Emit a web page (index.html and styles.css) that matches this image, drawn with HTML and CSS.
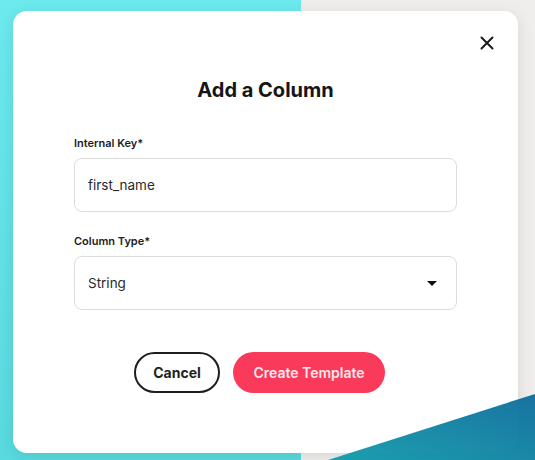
FILE: index.html
```html
<!DOCTYPE html>
<html lang="en">
<head>
<meta charset="utf-8">
<title>Add a Column</title>
<link rel="stylesheet" href="styles.css">
</head>
<body>
<div class="backdrop">
  <div class="modal">
    <div class="modal-top">
      <button class="close" aria-label="Close">
        <svg width="14" height="14" viewBox="0 0 14 14"><path d="M1.5 1.5 L12.5 12.5 M12.5 1.5 L1.5 12.5" stroke="#1c1c1c" stroke-width="2" stroke-linecap="round" fill="none"/></svg>
      </button>
    </div>
    <h1 class="title">Add a Column</h1>
    <div class="fields">
      <div class="field">
        <label class="label">Internal Key*</label>
        <div class="control">first_name</div>
      </div>
      <div class="field">
        <label class="label">Column Type*</label>
        <div class="control select">
          <span>String</span>
          <svg class="caret" width="10" height="5" viewBox="0 0 10 5"><path d="M0 0 H10 L5 5 Z" fill="#111"/></svg>
        </div>
      </div>
    </div>
    <div class="actions">
      <button class="btn btn-cancel">Cancel</button>
      <button class="btn btn-primary">Create Template</button>
    </div>
  </div>
  <svg class="wedge" width="207" height="66" viewBox="0 0 207 66">
    <defs>
      <linearGradient id="wg" x1="0" y1="1" x2="1" y2="0">
        <stop offset="0" stop-color="#0f9bab"/>
        <stop offset="1" stop-color="#0b6b9b"/>
      </linearGradient>
    </defs>
    <polygon points="0,66 207,0 207,66" fill="url(#wg)"/>
  </svg>
</div>
</body>
</html>
```

FILE: styles.css
```css
* { box-sizing: border-box; }
html, body {
  margin: 0;
  padding: 0;
}
body {
  font-family: "Inter", "Liberation Sans", sans-serif;
  color: #161616;
}
.backdrop {
  position: relative;
  width: 535px;
  height: 460px;
  overflow: hidden;
  padding: 11px 0 0 13px;
  background:
    linear-gradient(to right, transparent 0 301px, #efeeed 301px),
    linear-gradient(to bottom, #6ceaee, #58dadf);
}
.modal {
  width: 505px;
  height: 442px;
  background: #ffffff;
  border-radius: 14px;
  box-shadow: 0 3px 16px rgba(0, 0, 0, 0.10);
  padding: 0 61px;
  display: flex;
  flex-direction: column;
}
.modal-top {
  display: flex;
  justify-content: flex-end;
  margin: 25px -37px 0 0;
  height: 14px;
}
.close {
  border: 0;
  background: none;
  padding: 0;
  width: 14px;
  height: 14px;
  display: block;
  cursor: pointer;
}
.close svg { display: block; }
.title {
  margin: 28px 0 0 0;
  font-size: 20px;
  line-height: 24px;
  font-weight: 700;
  text-align: center;
  letter-spacing: 0;
  color: #151515;
}
.fields {
  margin-top: 34px;
  display: flex;
  flex-direction: column;
  gap: 22px;
}
.field {
  display: flex;
  flex-direction: column;
}
.label {
  font-size: 11px;
  line-height: 14px;
  font-weight: 600;
  color: #1d1d1d;
  margin-bottom: 8px;
}
.control {
  height: 54px;
  border: 1px solid #dcdcdc;
  border-radius: 8px;
  padding: 0 19px 0 13px;
  display: flex;
  align-items: center;
  font-size: 13.5px;
  color: #2a2a2a;
}
.select { justify-content: space-between; }
.caret { display: block; }
.actions {
  margin-top: 42px;
  display: flex;
  justify-content: center;
  gap: 13px;
  padding-right: 12px;
}
.btn {
  height: 41px;
  border-radius: 21px;
  font-family: "Inter", "Liberation Sans", sans-serif;
  font-size: 14px;
  font-weight: 700;
  cursor: pointer;
}
.btn-cancel {
  width: 86px;
  background: #fff;
  border: 2px solid #1e1e1e;
  color: #1e1e1e;
}
.btn-primary {
  width: 152px;
  border: 0;
  background: #f93a5b;
  color: #fde8ec;
  font-weight: 600;
}
.wedge {
  position: absolute;
  right: 0;
  bottom: 0;
  display: block;
  opacity: 0.94;
}
```
